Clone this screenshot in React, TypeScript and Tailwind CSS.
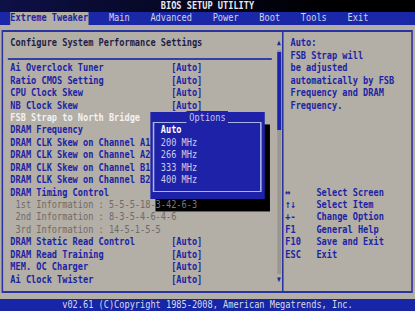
import React from "react";

type Tone = "item" | "sel" | "info";

// values hidden by the Options popup are left out
const rows: { label: string; value?: string; tone: Tone }[] = [
  { label: "Ai Overclock Tuner", value: "[Auto]", tone: "item" },
  { label: "Ratio CMOS Setting", value: "[Auto]", tone: "item" },
  { label: "CPU Clock Skew", value: "[Auto]", tone: "item" },
  { label: "NB Clock Skew", value: "[Auto]", tone: "item" },
  { label: "FSB Strap to North Bridge", tone: "sel" },
  { label: "DRAM Frequency", tone: "item" },
  { label: "DRAM CLK Skew on Channel A1", tone: "item" },
  { label: "DRAM CLK Skew on Channel A2", tone: "item" },
  { label: "DRAM CLK Skew on Channel B1", tone: "item" },
  { label: "DRAM CLK Skew on Channel B2", tone: "item" },
  { label: "DRAM Timing Control", tone: "item" },
];

const info = [" 2nd Information : 8-3-5-4-6-4-6", " 3rd Information : 14-5-1-5-5"];

const tail = ["DRAM Static Read Control", "DRAM Read Training", "MEM. OC Charger", "Ai Clock Twister"];

const tones: Record<Tone, string> = {
  item: "text-[#1c24a4]",
  sel: "text-[#f2f2f2]",
  info: "text-[#6f6b68]",
};

const help = ["Auto:", "FSB Strap will", "be adjusted", "automatically by FSB", "Frequency and DRAM", "Frequency."];

const keys: [string, string][] = [
  ["↔", "Select Screen"],
  ["↑↓", "Select Item"],
  ["+-", "Change Option"],
  ["F1", "General Help"],
  ["F10", "Save and Exit"],
  ["ESC", "Exit"],
];

const tabs = ["Main", "Advanced", "Power", "Boot", "Tools", "Exit"];
const options = ["Auto", "200 MHz", "266 MHz", "333 MHz", "400 MHz"];

export default function App() {
  return (
    <div className="h-[311px] w-[415px] overflow-hidden bg-[#b3aea6]">
      {/* text-mode screen: 80 cols x 25 rows, squeezed horizontally like the VGA font */}
      <div className="relative h-[311px] w-[80ch] origin-top-left scale-x-[0.7833] font-['DejaVu_Sans_Mono',monospace] text-[11px] font-bold leading-[12.44px]">
        <div className="h-[12.44px] bg-gradient-to-r from-[#0e1048] via-[#05061c] to-black text-center text-[#e8e8f0]">
          BIOS SETUP UTILITY
        </div>

        {/* Tabs */}
        <nav className="flex h-[12.44px] gap-[4ch] bg-[#1a28a8] pl-[2ch] font-normal text-[#cfd2ea]">
          <span className="bg-[#b3aea6] font-bold text-[#1c24a4]">Extreme Tweaker</span>
          {tabs.map((t) => (
            <span key={t}>{t}</span>
          ))}
        </nav>

        {/* Main frame */}
        <div className="ml-[calc(0.5ch-1px)] mt-[5.22px] flex h-[263.24px] w-[calc(79ch+2px)] border-2 border-[#2a33a2]">
          <section className="flex w-[54ch] border-r-2 border-[#2a33a2] pt-[5.22px]">
            <div className="flex-1 pl-[calc(1.5ch-1px)]">
              <div className="h-[12.44px] whitespace-pre text-[#1e1e48]">Configure System Performance Settings</div>
              <div className="h-[12.44px] pr-[1ch] pt-[8.5px]">
                <div className="ml-[-0.5ch] h-[2px] bg-[#3240a6]" />
              </div>
              {rows.map((r) => (
                <div key={r.label} className={`flex h-[12.44px] whitespace-pre ${tones[r.tone]}`}>
                  <span className="w-[31ch]">{r.label}</span>
                  {r.value && <span>{r.value}</span>}
                </div>
              ))}
              {/* row under the popup's shadow */}
              <div className="flex h-[12.44px] whitespace-pre font-normal text-[#6f6b68]">
                <span className="w-[28ch]"> 1st Information : 5-5-5-18-</span>
                <span className="relative z-10 w-[22ch] bg-black text-[#7a7672]">3-42-6-3</span>
              </div>
              {info.map((t) => (
                <div key={t} className="h-[12.44px] whitespace-pre font-normal text-[#6f6b68]">
                  {t}
                </div>
              ))}
              {tail.map((t) => (
                <div key={t} className="flex h-[12.44px] whitespace-pre text-[#1c24a4]">
                  <span className="w-[31ch]">{t}</span>
                  <span>[Auto]</span>
                </div>
              ))}
            </div>

            {/* Scrollbar */}
            <div className="mr-[calc(0.5ch-1px)] flex w-[1ch] flex-col items-center text-[8px] text-[#1c24a4]">
              <div className="h-[12.44px]">▲</div>
              <div className="h-[223.92px] w-[5px] bg-[#9a9690]">
                <div className="mt-[2px] h-[78px] bg-[#1c24a8]" />
              </div>
              <div className="h-[12.44px]">▼</div>
            </div>
          </section>

          <section className="flex-1 pl-[calc(0.5ch-1px)] pt-[5.22px] text-[#1c24a4]">
            {help.map((h) => (
              <div key={h} className="h-[12.44px] whitespace-pre pl-[1ch]">
                {h}
              </div>
            ))}
            <div className="h-[74.64px]" />
            {keys.map(([k, d]) => (
              <div key={k} className="flex h-[12.44px] whitespace-pre">
                <span className="w-[6ch]">{k}</span>
                <span>{d}</span>
              </div>
            ))}
          </section>
        </div>

        <footer className="mt-[5.22px] h-[12.44px] bg-[#1626a6] text-center font-normal text-[#dadae2]">
          v02.61 (C)Copyright 1985-2008, American Megatrends, Inc.
        </footer>

        {/* Options popup */}
        <div className="absolute left-[29ch] top-[111.96px] h-[87.08px] w-[22ch] bg-[#1e22a8] shadow-[6.62px_12.44px_0_0_#000]">
          <div className="absolute bottom-[7px] left-[0.5ch] right-[0.5ch] top-[10px] border-x-2 border-y border-[#aab2e6]" />
          <div className="relative h-[12.44px] text-center font-normal">
            <span className="bg-[#1e22a8] px-[0.5ch] text-[#c0c6ec]">Options</span>
          </div>
          <div className="relative pl-[2ch]">
            {options.map((o, i) => (
              <div key={o} className={`h-[12.44px] whitespace-pre ${i === 0 ? "text-white" : "font-normal text-[#c8cce8]"}`}>
                {o}
              </div>
            ))}
          </div>
        </div>
      </div>
    </div>
  );
}
